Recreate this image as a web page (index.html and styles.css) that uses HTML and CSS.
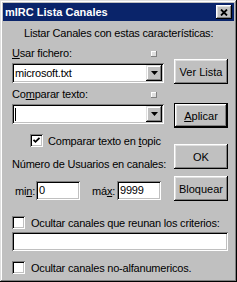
FILE: index.html
```html
<!DOCTYPE html>
<html lang="es">
  <head>
    <meta charset="UTF-8" />
    <title>mIRC Lista Canales</title>
    <link rel="stylesheet" href="styles.css">
  </head>
  <body>
    <div class="window">
      <div class="titlebar">
        <span class="title">mIRC Lista Canales</span>
        <span class="close">
          <svg width="8" height="7" viewBox="0 0 8 7"><path d="M1 0.5 L7 6.5 M7 0.5 L1 6.5" stroke="#000" stroke-width="1.8" fill="none"/></svg>
        </span>
      </div>

      <div class="content">
        <div class="intro">Listar Canales con estas características:</div>

        <div class="main">
          <div class="left">
            <div class="label-row"><span><u>U</u>sar fichero:</span><span class="mini"></span></div>
            <div class="combo">
              <span class="combo-text">microsoft.txt</span>
              <span class="combo-btn"><svg width="7" height="4" viewBox="0 0 7 4"><path d="M0 0h7l-3.5 4z" fill="#000"/></svg></span>
            </div>

            <div class="label-row"><span>Co<u>m</u>parar texto:</span><span class="mini"></span></div>
            <div class="combo">
              <span class="combo-text"><span class="caret"></span></span>
              <span class="combo-btn"><svg width="7" height="4" viewBox="0 0 7 4"><path d="M0 0h7l-3.5 4z" fill="#000"/></svg></span>
            </div>

            <div class="check topic">
              <span class="box"><svg width="9" height="9" viewBox="0 0 9 9"><path d="M1.5 3.8 L3.5 5.8 L7.5 1.8" stroke="#000" stroke-width="1.8" fill="none"/></svg></span>
              <span>Comparar texto en <u>t</u>opic</span>
            </div>

            <div class="users">Número de Usuarios en canales:</div>
            <div class="range">
              <span class="range-label">mi<u>n</u>:</span>
              <span class="field small">0</span>
              <span class="range-label max">má<u>x</u>:</span>
              <span class="field small">9999</span>
            </div>
          </div>

          <div class="buttons">
            <button class="btn">Ver Lista</button>
            <button class="btn default apply"><u>A</u>plicar</button>
            <button class="btn ok">OK</button>
            <button class="btn block">Bloquear</button>
          </div>
        </div>

        <div class="check hide">
          <span class="box"></span>
          <span>Ocultar canales que reunan los criterios:</span>
        </div>
        <div class="field wide"></div>
        <div class="check alnum">
          <span class="box"></span>
          <span>Ocultar canales no-alfanumericos.</span>
        </div>
      </div>
    </div>
  </body>
</html>
```

FILE: styles.css
```css
body {
  margin: 0;
  background: #c0c0c0;
}
.window {
  width: 237px;
  height: 282px;
  box-sizing: border-box;
  padding: 3px;
  background: #c0c0c0;
  box-shadow: inset -1px -1px #000, inset 1px 1px #dfdfdf, inset -2px -2px #808080, inset 2px 2px #fff;
  font: 11px "Liberation Sans", Arial, sans-serif;
  letter-spacing: -0.2px;
  color: #000;
  white-space: nowrap;
}
.titlebar {
  height: 18px;
  background: #0a246a;
  display: flex;
  align-items: center;
  justify-content: space-between;
  padding: 0 2px 0 2px;
  color: #fff;
  font-weight: bold;
  letter-spacing: 0;
}
.close {
  width: 16px;
  height: 14px;
  box-sizing: border-box;
  background: #c0c0c0;
  box-shadow: inset -1px -1px #000, inset 1px 1px #fff, inset -2px -2px #808080, inset 2px 2px #dfdfdf;
  display: flex;
  align-items: center;
  justify-content: center;
}
.content {
  padding: 0 6px 0 9px;
}
.intro {
  margin-top: 6px;
  line-height: 13px;
  padding-left: 12px;
}
.main {
  display: flex;
  gap: 10px;
}
.left {
  width: 152px;
  flex-shrink: 0;
  padding-top: 7px;
  display: flex;
  flex-direction: column;
}
.label-row {
  height: 13px;
  line-height: 13px;
  display: flex;
  align-items: center;
  justify-content: space-between;
  padding-right: 7px;
}
.mini {
  width: 6px;
  height: 6px;
  box-sizing: border-box;
  background: #dfdfdf;
  box-shadow: inset -1px -1px #808080, inset 1px 1px #fff;
}
.combo {
  height: 20px;
  margin: 3px 0 5px;
  box-sizing: border-box;
  padding: 2px;
  background: #fff;
  box-shadow: inset 1px 1px #808080, inset -1px -1px #fff, inset 2px 2px #000, inset -2px -2px #c0c0c0;
  display: flex;
  align-items: center;
}
.combo-text {
  flex: 1;
  padding-left: 1px;
  line-height: 16px;
  display: flex;
  align-items: center;
}
.caret {
  width: 1px;
  height: 13px;
  background: #000;
}
.combo-btn {
  width: 16px;
  height: 16px;
  box-sizing: border-box;
  background: #c0c0c0;
  box-shadow: inset -1px -1px #000, inset 1px 1px #dfdfdf, inset -2px -2px #808080, inset 2px 2px #fff;
  display: flex;
  align-items: center;
  justify-content: center;
}
.check {
  height: 13px;
  display: flex;
  align-items: center;
  gap: 6px;
}
.box {
  width: 13px;
  height: 13px;
  box-sizing: border-box;
  background: #fff;
  box-shadow: inset 1px 1px #808080, inset -1px -1px #fff, inset 2px 2px #000, inset -2px -2px #c0c0c0;
  display: flex;
  align-items: center;
  justify-content: center;
  flex-shrink: 0;
}
.check.topic {
  margin-top: 5px;
  margin-left: 18px;
  gap: 5px;
}
.users {
  margin-top: 11px;
  line-height: 13px;
}
.range {
  margin-top: 10px;
  display: flex;
  align-items: center;
  padding-left: 3px;
}
.range-label {
  width: 21px;
}
.range-label.max {
  width: 25px;
  margin-left: 12px;
}
.field {
  box-sizing: border-box;
  height: 19px;
  padding: 2px 3px;
  line-height: 15px;
  background: #fff;
  box-shadow: inset 1px 1px #808080, inset -1px -1px #fff, inset 2px 2px #000, inset -2px -2px #c0c0c0;
}
.field.small {
  width: 44px;
}
.buttons {
  width: 54px;
  padding-top: 19px;
  display: flex;
  flex-direction: column;
}
.btn {
  width: 54px;
  height: 25px;
  box-sizing: border-box;
  border: none;
  padding: 0;
  background: #c0c0c0;
  font: inherit;
  color: #000;
  box-shadow: inset -1px -1px #000, inset 1px 1px #fff, inset -2px -2px #808080, inset 2px 2px #dfdfdf;
}
.btn.default {
  border: 1px solid #000;
}
.btn.apply {
  margin-top: 19px;
}
.btn.ok {
  margin-top: 16px;
}
.btn.block {
  margin-top: 7px;
}
.check.hide {
  margin-top: 15px;
}
.field.wide {
  margin-top: 3px;
}
.check.alnum {
  margin-top: 10px;
}
```
